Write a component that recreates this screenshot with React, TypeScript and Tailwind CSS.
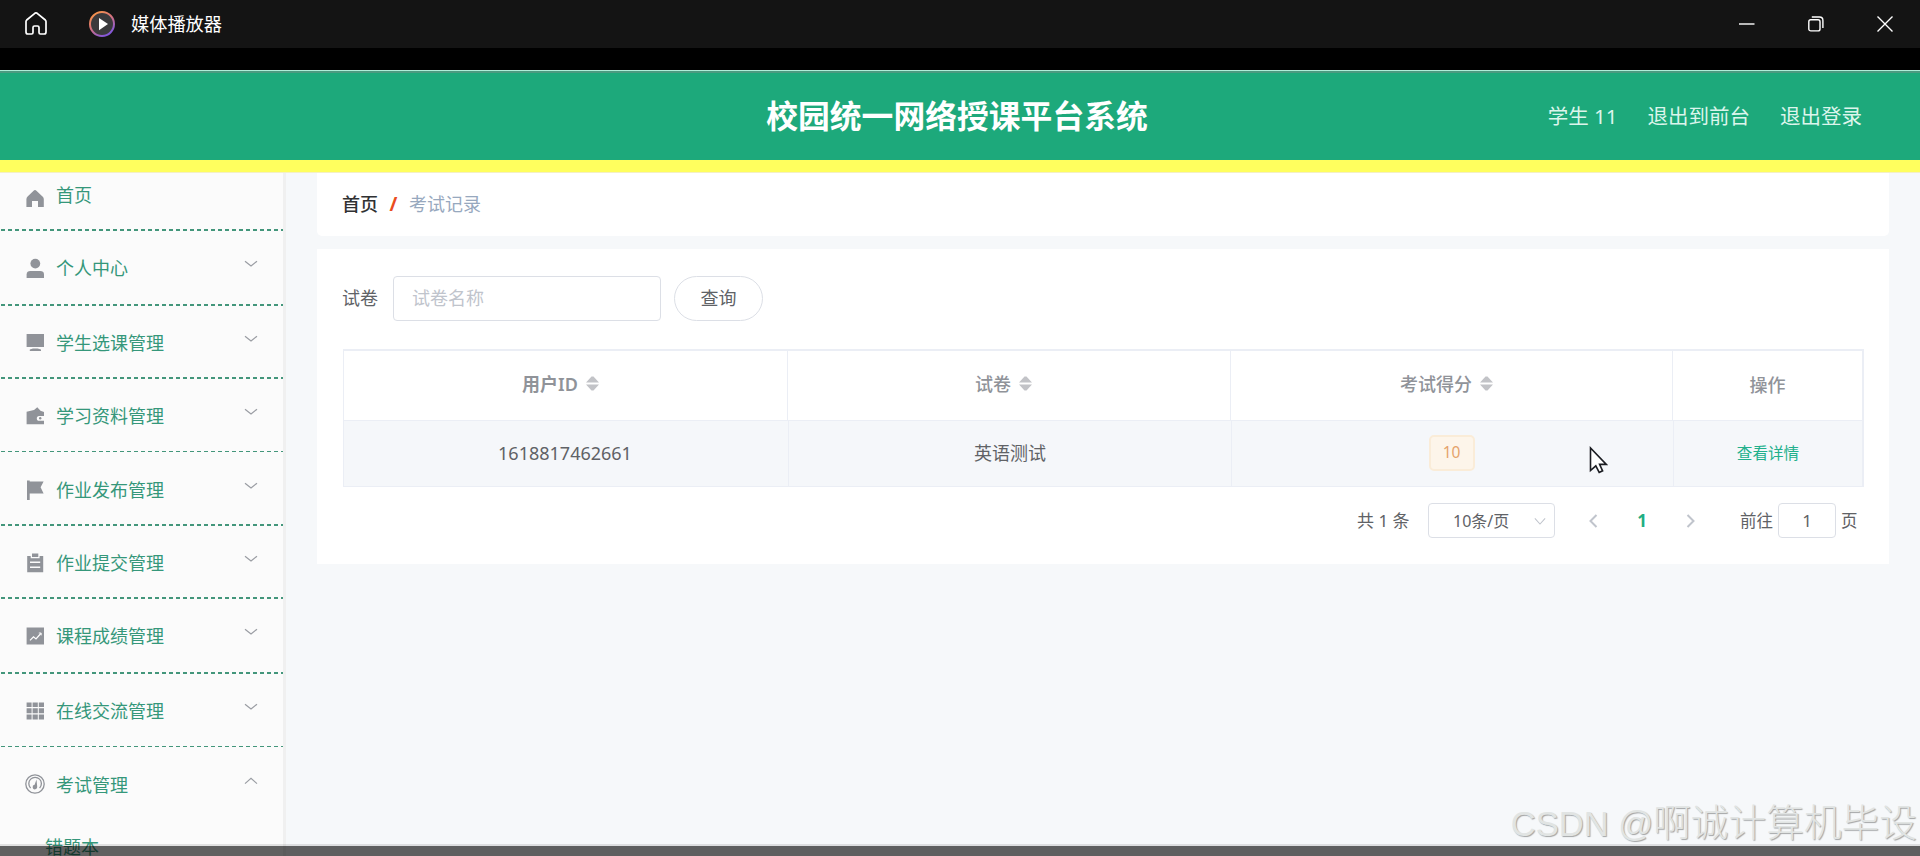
import React from "react";

const textFont = "font-['Noto_Sans','Noto_Sans_CJK_SC',sans-serif]";

type MenuItem = {
  name: string;
  icon: React.ReactNode;
  row: string;
  arrow?: "down" | "up";
};

/* Sidebar icons */
const icons = {
  home: <path d="M9 0 C9.6 0 10 .3 10.4 .7 L16.5 6.6 C17.3 7.4 17.8 8.2 17.8 9.3 V17 H12 V11 H6 V17 H.4 V9.3 C.4 8.2 .8 7.4 1.6 6.6 L7.6 .7 C8 .3 8.4 0 9 0Z" />,
  user: (
    <>
      <circle cx="9.3" cy="4.6" r="4.9" />
      <path d="M.6 19 V15.4 C.6 13 2.3 12 4.2 12 H14.2 C16.5 12 18 13 18 15.4 V19Z" />
    </>
  ),
  monitor: <path d="M.6 0 H18 V13 H.6Z M7 14.4 H11.6 L15 15.6 V17 H3.8 V15.6Z" />,
  wallet: (
    <>
      <path d="M.6 4.7 L8 3 L11.3 .2 L14.5 3.8 L18 5 V9 H13.2 C11.5 9 10.8 10 10.8 11.4 C10.8 13 11.6 13.8 13.2 13.8 H18 V17.3 H.6Z" />
      <circle cx="14.2" cy="11.3" r="1.2" />
    </>
  ),
  flag: <path d="M1 -.5 H3.7 V.5 H17.6 L14.6 6.3 L17.6 12.4 H3.7 V19 H1Z" />,
  clipboard: (
    <path
      fillRule="evenodd"
      d="M6 -.5 H12.3 V3 H6Z M1.2 2 H4.7 V4.3 H13.6 V2 H17.2 V18.3 H1.2Z M4 7.5 V9 H14.2 V7.5Z M4 12.5 V14 H14.2 V12.5Z"
    />
  ),
  chart: (
    <>
      <path d="M.6 .5 H18 V17.5 H.6Z" />
      <path d="M4 13.4 L7.5 9.8 L10 12 L14.8 6.5" fill="none" stroke="#fff" strokeWidth="1.2" />
      <path d="M12.8 6 H15.2 V8.4" fill="none" stroke="#fff" strokeWidth=".9" />
    </>
  ),
  grid: <path d="M.6 .5 H5.6 V5 H.6Z M6.6 .5 H11.8 V5 H6.6Z M12.8 .5 H18 V5 H12.8Z M.6 6.3 H5.6 V11.2 H.6Z M6.6 6.3 H11.8 V11.2 H6.6Z M12.8 6.3 H18 V11.2 H12.8Z M.6 12.6 H5.6 V17.4 H.6Z M6.6 12.6 H11.8 V17.4 H6.6Z M12.8 12.6 H18 V17.4 H12.8Z" />,
  gauge: (
    <>
      <circle cx="9" cy="8" r="9.2" fill="none" stroke="#909399" strokeWidth="1.3" />
      <path d="M4.6 12 A6.3 6.3 0 1 1 13.6 12" fill="none" stroke="#909399" strokeWidth="1.3" />
      <path d="M10.5 3.5 L11.2 10.6 A2.3 2.3 0 1 1 8.6 8.8Z" />
    </>
  ),
};

const menu: MenuItem[] = [
  { name: "首页", icon: icons.home, row: "h-[58px] pt-[9px]" },
  { name: "个人中心", icon: icons.user, row: "h-[75px] pt-[24px]", arrow: "down" },
  { name: "学生选课管理", icon: icons.monitor, row: "h-[73px] pt-[24px]", arrow: "down" },
  { name: "学习资料管理", icon: icons.wallet, row: "h-[73px] pt-[24px]", arrow: "down" },
  { name: "作业发布管理", icon: icons.flag, row: "h-[74px] pt-[25px]", arrow: "down" },
  { name: "作业提交管理", icon: icons.clipboard, row: "h-[73px] pt-[24px]", arrow: "down" },
  { name: "课程成绩管理", icon: icons.chart, row: "h-[75px] pt-[24px]", arrow: "down" },
  { name: "在线交流管理", icon: icons.grid, row: "h-[73px] pt-[24px]", arrow: "down" },
  { name: "考试管理", icon: icons.gauge, row: "h-[75px] pt-[25px]", arrow: "up" },
];

function Chevron({ className, d }: { className: string; d: string }) {
  return (
    <svg className={className} viewBox="0 0 14 14" fill="none" stroke="currentColor" strokeWidth="1.2">
      <path d={d} />
    </svg>
  );
}

function SortCaret() {
  return (
    <svg className="h-[15px] w-[13px] shrink-0" viewBox="0 0 13 15" fill="#c2c3c7">
      <path d="M0 6.4 L5.5 .6 H7.5 L13 6.4Z M0 8.6 H13 L7.5 14.4 H5.5Z" />
    </svg>
  );
}

function TitleBar() {
  return (
    <div className="flex h-12 shrink-0 items-center bg-[#141414] pl-[25px] text-white">
      <svg className="mb-px h-[23px] w-[22px]" viewBox="0 0 22 23" fill="none" stroke="#fff" strokeWidth="1.7" strokeLinejoin="round">
        <path d="M1 9.6 C1 8.9 1.2 8.5 1.7 8 L9.8 1.3 C10.6 .7 11.4 .7 12.2 1.3 L20.3 8 C20.8 8.5 21 8.9 21 9.6 V20 C21 21.3 20.3 22 19.2 22 H15.4 C14.5 22 14 21.4 14 20.6 V15.6 C14 14.6 13.5 14 12.5 14 H9.5 C8.5 14 8 14.6 8 15.6 V20.6 C8 21.4 7.5 22 6.6 22 H2.8 C1.7 22 1 21.3 1 20Z" />
      </svg>
      <svg className="ml-[42px] h-[26px] w-[26px]" viewBox="0 0 26 26">
        <defs>
          <linearGradient id="ring" x1="0" y1="0" x2=".6" y2="1">
            <stop offset="0" stopColor="#ff9d3c" />
            <stop offset=".5" stopColor="#d9747a" />
            <stop offset="1" stopColor="#8558d8" />
          </linearGradient>
        </defs>
        <circle cx="13" cy="13" r="12" fill="#3a3a3c" stroke="url(#ring)" strokeWidth="2" />
        <path d="M10 7 L19 13 L10 19.2Z" fill="#fff" />
      </svg>
      <span className="ml-4 text-[18.2px] leading-6">媒体播放器</span>
      <div className="mr-[27px] mb-px ml-auto flex items-center gap-[53px]">
        <svg className="h-4 w-4" viewBox="0 0 16 16" stroke="#fff" strokeWidth="1.4">
          <path d="M0 8 H15.5" />
        </svg>
        <svg className="h-4 w-4" viewBox="0 0 16 16" fill="none" stroke="#fff" strokeWidth="1.4">
          <rect x=".8" y="3.7" width="11.2" height="11.2" rx="2" />
          <path d="M3.8 1 H11.5 C13.6 1 14.9 2.3 14.9 4.4 V12" />
        </svg>
        <svg className="h-4 w-4" viewBox="0 0 16 16" stroke="#fff" strokeWidth="1.4">
          <path d="M.5 .5 L15.5 15.5 M15.5 .5 L.5 15.5" />
        </svg>
      </div>
    </div>
  );
}

function Header() {
  return (
    <header className="grid h-[103px] shrink-0 grid-cols-[1fr_auto_1fr] items-center border-t border-b border-t-[#aeeed8] border-b-[#f4f0c4] bg-[linear-gradient(#4c9a80_2px,#1da97b_2px,#1da97b_89px,#ffff5e_89px)] pb-[11px]">
      <span />
      <h1 className="pr-[6px] text-[31.8px] leading-10 font-bold text-white">校园统一网络授课平台系统</h1>
      <nav className="flex justify-end gap-[30px] pr-[58px] text-[20.5px] leading-7 text-[#dcf5ec]">
        <span>学生 11</span>
        <span>退出到前台</span>
        <span>退出登录</span>
      </nav>
    </header>
  );
}

function Sidebar() {
  return (
    <aside className="w-[286px] shrink-0 border-r-[3px] border-[#f0f0f0] bg-[#fbfbfb] text-lg leading-[27px] text-[#35977a]">
      {menu.map((item, i) => (
        <div key={item.name} className={`flex flex-col justify-between ${item.row}`}>
          <div className="flex items-start pl-[26px]">
            <svg className={`h-[18px] w-[18px] overflow-visible ${i === 0 ? "mt-2" : "mt-1"}`} viewBox="0 0 18 18" fill="#909399">
              {item.icon}
            </svg>
            <span className="ml-3">{item.name}</span>
            {item.arrow && (
              <Chevron
                className="mr-[25px] ml-auto h-[14px] w-[14px] text-[#9a9da3]"
                d={item.arrow === "down" ? "M1 6.2 L7 11 L13 6.2" : "M1 11.6 L7 6.4 L13 11.6"}
              />
            )}
          </div>
          {i < menu.length - 1 && (
            <div
              className={`ml-px bg-[repeating-linear-gradient(90deg,#43967b_0_4px,transparent_4px_7px)] ${
                i === 3 || i === 7 ? "h-px" : "h-0.5"
              }`}
            />
          )}
        </div>
      ))}
      <div className="pt-[16px] pl-[45px] leading-[18px]">错题本</div>
    </aside>
  );
}

function RecordTable() {
  return (
    <div className="mt-7 w-[1521px] border border-t-2 border-r-2 border-[#ebeef5] text-lg leading-7">
      {/* Table Header */}
      <div className="grid h-[70px] grid-cols-[444px_443px_442px_1fr] divide-x divide-[#ebeef5] border-b border-[#ebeef5] font-medium text-[#909399]">
        <div className="flex items-center justify-center gap-2 pr-[10px] pb-1">
          <span className="font-semibold">用户ID</span>
          <SortCaret />
        </div>
        <div className="flex items-center justify-center gap-2 pr-[11px] pb-1">
          试卷
          <SortCaret />
        </div>
        <div className="flex items-center justify-center gap-2 pr-[10px] pb-1">
          考试得分
          <SortCaret />
        </div>
        <div className="flex items-center justify-center pb-0.5">操作</div>
      </div>

      {/* Table Body */}
      <div className="grid h-[65px] grid-cols-[445px_443px_442px_1fr] divide-x divide-[#ebeef5] bg-[#f5f7fa] text-[#606266]">
        <div className="flex items-center justify-center pr-0.5 pb-0.5">1618817462661</div>
        <div className="flex items-center justify-center pb-0.5">英语测试</div>
        <div className="flex items-center justify-center pr-0.5 pb-0.5">
          <span className="flex h-9 w-[46px] items-center justify-center rounded-[5px] border-2 border-[#faecd8] bg-[#fdf5ea] pb-0.5 text-[15.5px] text-[#e5a36a]">
            10
          </span>
        </div>
        <div className="flex items-center justify-center pb-0.5 text-[15.6px] text-[#22b08c]">查看详情</div>
      </div>
    </div>
  );
}

function Pagination() {
  return (
    <div className="mt-4 flex h-[35px] items-center text-[16.5px] leading-6 text-[#606266]">
      <span className="ml-[1014px] w-[71px] text-[17px]">共 1 条</span>
      <div className="flex h-[35px] w-[127px] items-center rounded border border-[#dcdfe6] pl-[24px] text-base">
        10条/页
        <Chevron className="mr-2 ml-auto h-3 w-3 text-[#c0c4cc]" d="M1 4 L7 10.5 L13 4" />
      </div>
      <Chevron className="ml-[31px] h-[14px] w-[14px] stroke-2 text-[#c0c4cc]" d="M10.5 1 L4.5 7 L10.5 13" />
      <span className="ml-[37px] w-[10px] text-center text-[17px] font-bold text-[#1fae83]">1</span>
      <Chevron className="ml-9 h-[14px] w-[14px] stroke-2 text-[#c0c4cc]" d="M4.5 1 L10.5 7 L4.5 13" />
      <span className="ml-[43px]">前往</span>
      <div className="ml-[5px] flex h-[35px] w-[58px] items-center justify-center rounded border border-[#dcdfe6] text-[17px]">1</div>
      <span className="ml-[5px]">页</span>
    </div>
  );
}

export default function App() {
  return (
    <div className={`relative flex h-[856px] w-[1920px] flex-col overflow-hidden bg-black ${textFont}`}>
      <TitleBar />
      <div className="mt-[22px] flex flex-1 flex-col overflow-hidden bg-[#f6f8fa]">
        <Header />
        <div className="flex h-[683px] shrink-0">
          <Sidebar />
          <main className="ml-[31px] w-[1572px]">
            {/* Breadcrumb */}
            <div className="flex h-[63px] items-center rounded-b-[5px] bg-white pb-0.5 pl-[25px] text-lg leading-7">
              <span className="font-medium text-[#303133]">首页</span>
              <span className="mx-[9px] w-[13px] text-center text-[19px] font-bold text-[#ea4c20]">/</span>
              <span className="text-[#97a8be]">考试记录</span>
            </div>

            <section className="mt-[13px] h-[315px] bg-white pt-[27px] pl-[26px]">
              <div className="-ml-px flex h-[45px] items-center text-lg leading-7 text-[#606266]">
                <span className="pb-0.5">试卷</span>
                <input
                  className="ml-[15px] h-[45px] w-[268px] rounded border border-[#dcdfe6] pb-0.5 pl-[18px] placeholder:text-[#c0c4cc]"
                  placeholder="试卷名称"
                />
                <button className="ml-[13px] h-[45px] w-[89px] rounded-full border border-[#dcdfe6] pb-0.5">查询</button>
              </div>
              <RecordTable />
              <Pagination />
            </section>
          </main>
        </div>
      </div>

      {/* Mouse pointer */}
      <svg className="absolute top-[446px] left-[1589px] h-[28px] w-[19px]" viewBox="0 0 19 28">
        <path d="M1.5 2 V24.5 L6.8 19.8 L10.2 26.4 L13.6 24.8 L10.6 18.4 H17.3Z" fill="#fff" stroke="#1b1d22" strokeWidth="1.6" />
      </svg>

      <div className="absolute top-[797px] right-[3px] font-['Liberation_Sans','Noto_Sans_CJK_SC',sans-serif] text-[37.7px] leading-[52px] font-light whitespace-nowrap text-[#e1e4e3] [text-shadow:1px_1px_1px_#a2a4a5]">
        <span className="text-[34.5px]">CSDN @</span>啊诚计算机毕设
      </div>
      <div className="absolute inset-x-0 bottom-0 h-3 border-t-2 border-black/10 bg-black/62 bg-clip-padding" />
    </div>
  );
}
